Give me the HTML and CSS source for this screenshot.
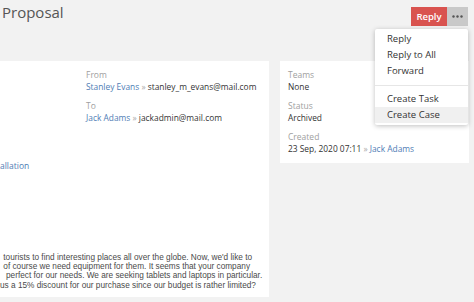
FILE: index.html
```html
<!DOCTYPE html>
<html lang="en">
<head>
    <meta charset="UTF-8">
    <meta name="viewport" content="width=device-width, initial-scale=1.0">
    <title>Proposal</title>
    <link rel="stylesheet" href="styles.css">
</head>
<body>
    <div class="page-header">
        <h1 class="page-title">Proposal</h1>
        <div class="actions">
            <button class="btn btn-reply">Reply</button>
            <button class="btn btn-more">
                <svg width="11" height="3" viewBox="0 0 11 3">
                    <circle cx="1.5" cy="1.5" r="1.2" fill="#555"/>
                    <circle cx="5.5" cy="1.5" r="1.2" fill="#555"/>
                    <circle cx="9.5" cy="1.5" r="1.2" fill="#555"/>
                </svg>
            </button>
            <ul class="dropdown">
                <li>Reply</li>
                <li>Reply to All</li>
                <li>Forward</li>
                <li class="divider"></li>
                <li>Create Task</li>
                <li class="active">Create Case</li>
            </ul>
        </div>
    </div>

    <div class="content">
        <div class="card card-main">
            <div class="fields">
                <div class="field-col field-col-left">
                    <a class="link name-cut">allation</a>
                </div>
                <div class="field-col">
                    <div class="field">
                        <div class="label">From</div>
                        <div class="value"><a class="link">Stanley Evans</a> <span class="sep">&raquo;</span> stanley_m_evans@mail.com</div>
                    </div>
                    <div class="field">
                        <div class="label">To</div>
                        <div class="value"><a class="link">Jack Adams</a> <span class="sep">&raquo;</span> jackadmin@mail.com</div>
                    </div>
                </div>
            </div>
            <div class="mail-body">
                <p class="line l1">&nbsp;tourists to find interesting places all over the globe. Now, we'd like to</p>
                <p class="line l2">&nbsp;of course we need equipment for them. It seems that your company</p>
                <p class="line l3">perfect for our needs. We are seeking tablets and laptops in particular.</p>
                <p class="line l4">us a 15% discount for our purchase since our budget is rather limited?</p>
            </div>
        </div>

        <div class="card card-side">
            <div class="field">
                <div class="label">Teams</div>
                <div class="value">None</div>
            </div>
            <div class="field">
                <div class="label">Status</div>
                <div class="value">Archived</div>
            </div>
            <div class="field">
                <div class="label">Created</div>
                <div class="value">23 Sep, 2020 07:11 <span class="sep">&raquo;</span> <a class="link">Jack Adams</a></div>
            </div>
        </div>
    </div>
</body>
</html>
```

FILE: styles.css
```css
body {
    margin: 0;
    background-color: #f2f2f2;
    font-family: "Open Sans", Arial, sans-serif;
    color: #333;
    height: 302px;
    overflow: hidden;
}

.page-header {
    display: flex;
    justify-content: space-between;
    align-items: flex-start;
    height: 61px;
}

.page-title {
    margin: 2px 0 0 2px;
    font-size: 15px;
    font-weight: 400;
    color: #555;
}

.actions {
    position: relative;
    display: flex;
    margin: 7px 6px 0 0;
}

.btn {
    height: 19px;
    border: none;
    margin: 0;
    font-family: "Open Sans", Arial, sans-serif;
    cursor: pointer;
}

.btn-reply {
    width: 36px;
    padding: 0;
    background-color: #d9534f;
    color: #fff;
    font-size: 9.5px;
    font-weight: 600;
}

.btn-more {
    width: 21px;
    padding: 0;
    background-color: #c9c9c9;
    display: flex;
    align-items: center;
    justify-content: center;
}

/* выпадающее меню */
.dropdown {
    position: absolute;
    top: 22px;
    right: 0;
    width: 93px;
    margin: 0;
    padding: 2px 0 2px;
    list-style: none;
    background-color: #fff;
    box-shadow: 0 1px 5px rgba(0, 0, 0, 0.25);
    border-radius: 2px;
    font-size: 9.5px;
    color: #333;
}

.dropdown li {
    height: 16px;
    line-height: 16px;
    padding-left: 12px;
}

.dropdown .divider {
    height: 1px;
    margin: 6px 0 5px;
    background-color: #e6e6e6;
}

.dropdown .active {
    background-color: #f0f0f0;
}

.content {
    display: flex;
    gap: 11px;
    align-items: flex-start;
}

.card {
    background-color: #fff;
    box-sizing: border-box;
}

.card-main {
    width: 269px;
    height: 236px;
    display: flex;
    flex-direction: column;
    justify-content: space-between;
    padding: 8px 0 7px;
    overflow: hidden;
}

.card-side {
    width: 189px;
    height: 102px;
    padding: 8px 8px 0;
}

.fields {
    display: flex;
}

.field-col-left {
    width: 86px;
    padding-top: 83px;
}

.field {
    margin-bottom: 7px;
}

.label {
    font-size: 8.5px;
    line-height: 12px;
    color: #a0a0a0;
}

.value {
    font-size: 8.4px;
    line-height: 12px;
    color: #333;
    white-space: nowrap;
}

.link {
    color: #4f7db5;
    text-decoration: none;
}

.name-cut {
    font-size: 8.5px;
}

.sep {
    color: #aaa;
}

.mail-body {
    font-family: "Liberation Sans", Arial, sans-serif;
    font-size: 8.25px;
    color: #4a4a4a;
}

.line {
    margin: 0;
    line-height: 9.3px;
    white-space: nowrap;
}

.l1, .l2 {
    margin-left: 1px;
}

.l3 {
    margin-left: 6px;
}
```
